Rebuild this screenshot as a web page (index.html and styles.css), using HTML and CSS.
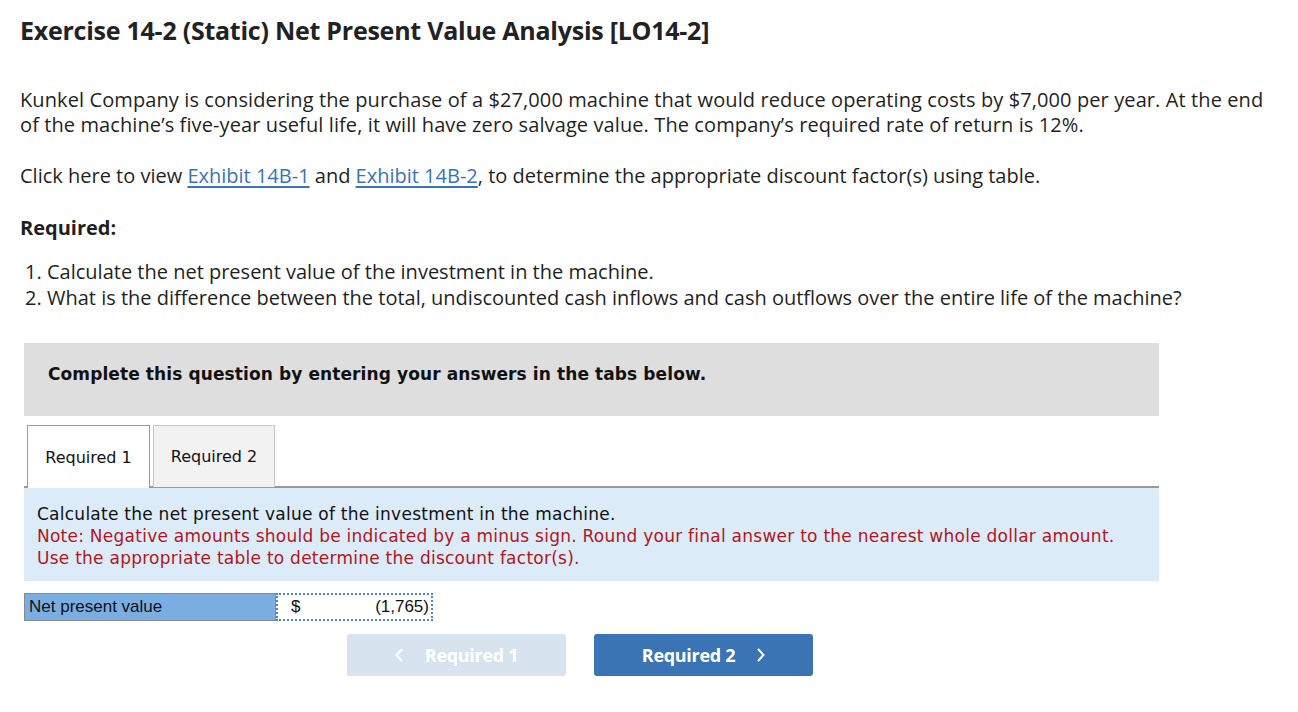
FILE: index.html
```html
<!DOCTYPE html>
<html>
<head>
<meta charset="utf-8">
<link rel="stylesheet" href="styles.css">
</head>
<body>
<div class="page">
  <h1 class="title">Exercise 14-2 (Static) Net Present Value Analysis [LO14-2]</h1>
  <p class="para">Kunkel Company is considering the purchase of a $27,000 machine that would reduce operating costs by $7,000 per year. At the end of the machine’s five-year useful life, it will have zero salvage value. The company’s required rate of return is 12%.</p>
  <p class="para click">Click here to view <a class="link" href="#">Exhibit 14B-1</a> and <a class="link" href="#">Exhibit 14B-2</a>, to determine the appropriate discount factor(s) using table.</p>
  <p class="req">Required:</p>
  <ol class="reqlist">
    <li>Calculate the net present value of the investment in the machine.</li>
    <li>What is the difference between the total, undiscounted cash inflows and cash outflows over the entire life of the machine?</li>
  </ol>
  <div class="banner">Complete this question by entering your answers in the tabs below.</div>
  <div class="tabs">
    <div class="tab active">Required 1</div>
    <div class="tab">Required 2</div>
  </div>
  <div class="instr">
    <div>Calculate the net present value of the investment in the machine.</div>
    <div class="note">Note: Negative amounts should be indicated by a minus sign. Round your final answer to the nearest whole dollar amount.</div>
    <div class="note">Use the appropriate table to determine the discount factor(s).</div>
  </div>
  <div class="row">
    <div class="label">Net present value</div>
    <div class="value"><span class="cur">$</span><span class="amt">(1,765)</span></div>
  </div>
  <div class="nav">
    <button class="btn prev"><svg class="chev" width="8" height="14" viewBox="0 0 8 14"><polyline points="7,1 1.5,7 7,13" fill="none" stroke="#fff" stroke-width="2"/></svg>Required 1</button>
    <button class="btn next">Required 2<svg class="chev r" width="8" height="14" viewBox="0 0 8 14"><polyline points="1,1 6.5,7 1,13" fill="none" stroke="#fff" stroke-width="2"/></svg></button>
  </div>
</div>
</body>
</html>
```
FILE: styles.css
```css
html, body { margin: 0; padding: 0; background: #fff; }
.page {
  padding: 14px 20px 0 20px;
  font-family: "Open Sans", Lato, sans-serif;
  color: #1f1f1f;
}
.title {
  margin: 0;
  font-size: 25px;
  line-height: 32px;
  font-weight: 700;
  color: #222;
  letter-spacing: -0.25px;
}
.para {
  margin: 41px 0 0 0;
  font-size: 20px;
  line-height: 25px;
  letter-spacing: 0.1px;
}
.para.click { margin-top: 26px; letter-spacing: 0; }
.link { color: #3a74b6; text-decoration: underline; text-underline-offset: 3px; }
.req {
  margin: 27px 0 0 0;
  font-size: 20px;
  line-height: 25px;
  font-weight: 700;
}
.reqlist {
  margin: 19px 0 0 0;
  padding-left: 27px;
  font-size: 20px;
  line-height: 26px;
}
.banner {
  margin: 32px 0 0 4px;
  width: 1135px;
  height: 73px;
  box-sizing: border-box;
  background: #dedede;
  padding: 19px 24px 0 24px;
  font-family: "DejaVu Sans", Verdana, sans-serif;
  font-weight: 700;
  font-size: 17px;
  letter-spacing: 0.1px;
  line-height: 24px;
  color: #111;
}
.tabs {
  margin: 9px 0 0 4px;
  width: 1135px;
  display: flex;
  gap: 3px;
  padding-left: 3px;
  box-sizing: border-box;
  border-bottom: 2px solid #9a9a9a;
  height: 63px;
}
.tab {
  width: 122px;
  height: 62px;
  box-sizing: border-box;
  border: 1px solid #c8c8c8;
  border-bottom: none;
  background: #f2f2f2;
  display: flex;
  align-items: center;
  justify-content: center;
  font-family: "DejaVu Sans", Verdana, sans-serif;
  font-size: 16px;
  color: #111;
}
.tab.active {
  width: 123px;
  height: 63px;
  background: #fff;
  border-color: #9a9a9a;
}
.instr {
  margin: 0 0 0 4px;
  width: 1135px;
  box-sizing: border-box;
  background: #dcebf8;
  padding: 15px 13px 12px 13px;
  font-family: "DejaVu Sans", Verdana, sans-serif;
  font-size: 17px;
  letter-spacing: 0.25px;
  line-height: 22px;
  color: #111;
}
.note { color: #b0161e; }
.row {
  margin: 12px 0 0 4px;
  display: flex;
  height: 28px;
  font-family: "Liberation Sans", Arial, sans-serif;
  font-size: 17px;
}
.label {
  width: 252px;
  box-sizing: border-box;
  border: 1px solid #8a8a8a;
  background: #7aade2;
  padding-left: 4px;
  line-height: 26px;
  color: #111;
}
.value {
  width: 157px;
  box-sizing: border-box;
  border: 2px dotted #4a86c8;
  display: flex;
  justify-content: space-between;
  padding: 0 2px 0 13px;
  line-height: 24px;
  color: #111;
}
.nav {
  margin-top: 13px;
  padding-left: 327px;
  display: flex;
  gap: 28px;
}
.btn {
  width: 219px;
  height: 42px;
  border: none;
  border-radius: 3px;
  font-family: "Open Sans", Lato, sans-serif;
  font-weight: 700;
  font-size: 18px;
  letter-spacing: -0.3px;
  color: #fff;
  display: flex;
  align-items: center;
  justify-content: center;
  padding: 0;
}
.prev { background: #d8e3f0; }
.next { background: #3b74b5; }
.chev { margin-right: 22px; }
.chev.r { margin-right: 0; margin-left: 22px; }
```
